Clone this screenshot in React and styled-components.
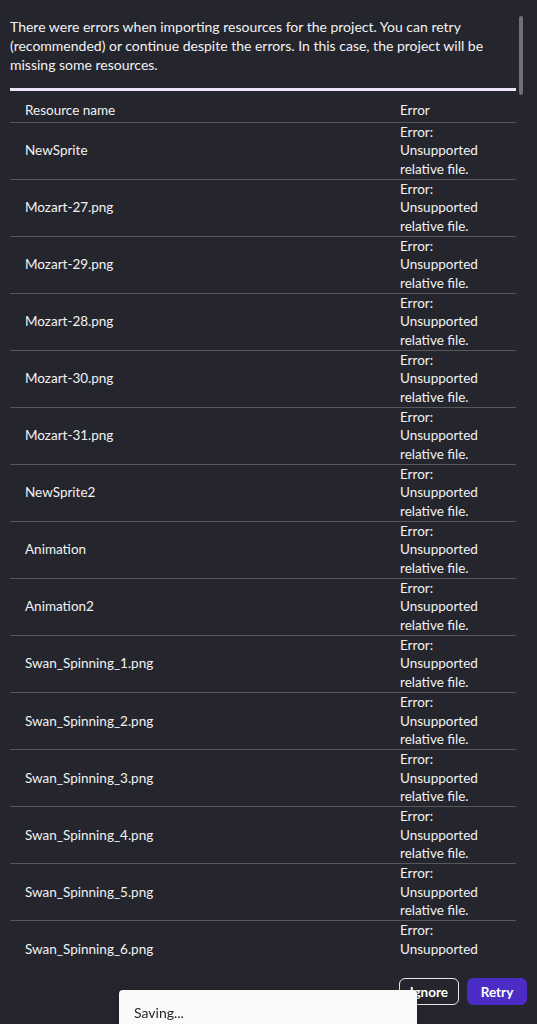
import React from "react";
import styled, { createGlobalStyle } from "styled-components";

const GlobalStyle = createGlobalStyle`
  html, body {
    margin: 0;
    padding: 0;
    background: #25262d;
  }
  body {
    font-family: Lato, "Noto Sans", sans-serif;
    color: #f2f2f4;
    overflow: hidden;
  }
`;

const firstNames = [
  "NewSprite",
  "Mozart-27.png",
  "Mozart-29.png",
  "Mozart-28.png",
  "Mozart-30.png",
  "Mozart-31.png",
  "NewSprite2",
  "Animation",
  "Animation2",
];

const resources = [
  ...firstNames,
  ...Array.from({ length: 180 }, (_, i) => `Swan_Spinning_${i + 1}.png`),
];

const App = () => {
  return (
    <>
      <GlobalStyle />
      <Page>
        <ScrollArea>
          <Scroller>
            <Intro>
              There were errors when importing resources for the project. You
              can retry (recommended) or continue despite the errors. In this
              case, the project will be missing some resources.
            </Intro>
            <Table>
              <thead>
                <tr>
                  <HeadCell>Resource name</HeadCell>
                  <HeadCell>Error</HeadCell>
                </tr>
              </thead>
              <tbody>
                {resources.map((name) => (
                  <Row key={name}>
                    <Cell>{name}</Cell>
                    <Cell>Error: Unsupported relative file.</Cell>
                  </Row>
                ))}
              </tbody>
            </Table>
          </Scroller>
          <Thumb />
        </ScrollArea>
        <Actions>
          <Button>Ignore</Button>
          <Button primary>Retry</Button>
        </Actions>
      </Page>
      <Snackbar>Saving...</Snackbar>
    </>
  );
};

export default App;

const Page = styled.div`
  height: 1024px;
  display: flex;
  flex-direction: column;
  padding-top: 14px;
  box-sizing: border-box;
`;

const ScrollArea = styled.div`
  position: relative;
  height: 943px;
  flex-shrink: 0;
`;

const Scroller = styled.div`
  height: 100%;
  overflow-y: auto;
  padding: 3px 21px 0 10px;
  box-sizing: border-box;
  scrollbar-width: none;
  &::-webkit-scrollbar {
    display: none;
  }
`;

const Thumb = styled.div`
  position: absolute;
  top: 2px;
  right: 14px;
  width: 4px;
  height: 79px;
  border-radius: 2px;
  background: #6f6f74;
`;

const Intro = styled.p`
  margin: 0 0 14px;
  font-size: 14px;
  line-height: 19px;
`;

const Table = styled.table`
  width: 100%;
  border-collapse: collapse;
  border-top: 3px solid #ebe5f7;
  table-layout: fixed;
  font-size: 13.5px;
  line-height: 18.67px;
`;

const HeadCell = styled.th`
  text-align: left;
  font-weight: 400;
  padding: 10px 15px 2px;
  border-bottom: 1px solid #56575d;
  &:first-child {
    width: 345px;
  }
`;

const Row = styled.tr`
  border-bottom: 1px solid #56575d;
`;

const Cell = styled.td`
  padding: 0 15px;
  vertical-align: middle;
`;

const Actions = styled.div`
  display: flex;
  justify-content: flex-end;
  gap: 8px;
  padding: 21px 10px 0;
`;

const Button = styled.button`
  height: 27px;
  min-width: 60px;
  padding: 0 10px;
  border-radius: 6px;
  font-family: inherit;
  font-size: 13.5px;
  font-weight: 700;
  color: #ffffff;
  cursor: pointer;
  background: ${(p) => (p.primary ? "#4b2dc5" : "transparent")};
  border: ${(p) => (p.primary ? "1px solid #4b2dc5" : "1.5px solid #e6e6ea")};
`;

const Snackbar = styled.div`
  position: fixed;
  left: 119px;
  bottom: 0;
  width: 298px;
  height: 34px;
  box-sizing: border-box;
  padding: 13px 15px 0;
  background: #fafafa;
  border-radius: 4px 4px 0 0;
  color: #25262d;
  font-size: 14px;
  line-height: 19px;
  box-shadow: 0 2px 6px rgba(0, 0, 0, 0.3);
`;
